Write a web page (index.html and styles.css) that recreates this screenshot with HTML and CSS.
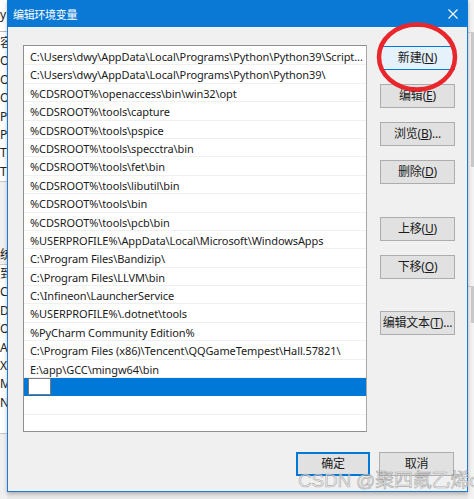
FILE: index.html
```html
<!DOCTYPE html>
<html lang="zh-CN">
<head>
<meta charset="utf-8">
<title>编辑环境变量</title>
<link rel="stylesheet" href="styles.css">
</head>
<body>
<div class="screen">
  <div class="bg-left">
    <div class="bg-top">y</div>
    <div class="bg-list">
      <div class="bg-row">容</div>
      <div class="bg-row">O</div>
      <div class="bg-row">O</div>
      <div class="bg-row">O</div>
      <div class="bg-row">Pa</div>
      <div class="bg-row">Py</div>
      <div class="bg-row">TE</div>
      <div class="bg-row">TM</div>
    </div>
    <div class="bg-gap"></div>
    <div class="bg-head">统</div>
    <div class="bg-list2">
      <div class="bg-row">到</div>
      <div class="bg-row">Co</div>
      <div class="bg-row">D/</div>
      <div class="bg-row">Or</div>
      <div class="bg-row">A</div>
      <div class="bg-row">XI</div>
      <div class="bg-row">M</div>
      <div class="bg-row">N</div>
    </div>
  </div>

  <div class="dialog">
    <div class="titlebar">
      <span class="title">编辑环境变量</span>
      <svg class="close" width="10" height="10" viewBox="0 0 10 10"><path d="M0.5 0.5L9.5 9.5M9.5 0.5L0.5 9.5" stroke="#fff" stroke-width="1.1" fill="none"/></svg>
    </div>
    <div class="body">
      <div class="list">
        <div class="row">C:\Users\dwy\AppData\Local\Programs\Python\Python39\Script...</div>
        <div class="row">C:\Users\dwy\AppData\Local\Programs\Python\Python39\</div>
        <div class="row">%CDSROOT%\openaccess\bin\win32\opt</div>
        <div class="row">%CDSROOT%\tools\capture</div>
        <div class="row">%CDSROOT%\tools\pspice</div>
        <div class="row">%CDSROOT%\tools\specctra\bin</div>
        <div class="row">%CDSROOT%\tools\fet\bin</div>
        <div class="row">%CDSROOT%\tools\libutil\bin</div>
        <div class="row">%CDSROOT%\tools\bin</div>
        <div class="row">%CDSROOT%\tools\pcb\bin</div>
        <div class="row">%USERPROFILE%\AppData\Local\Microsoft\WindowsApps</div>
        <div class="row">C:\Program Files\Bandizip\</div>
        <div class="row">C:\Program Files\LLVM\bin</div>
        <div class="row">C:\Infineon\LauncherService</div>
        <div class="row">%USERPROFILE%\.dotnet\tools</div>
        <div class="row">%PyCharm Community Edition%</div>
        <div class="row">C:\Program Files (x86)\Tencent\QQGameTempest\Hall.57821\</div>
        <div class="row">E:\app\GCC\mingw64\bin</div>
        <div class="row selected"><span class="editbox"></span></div>
        <div class="row"></div>
      </div>
      <div class="buttons">
        <button class="btn focused">新建(<u>N</u>)</button>
        <button class="btn">编辑(<u>E</u>)</button>
        <button class="btn">浏览(<u>B</u>)...</button>
        <button class="btn">删除(<u>D</u>)</button>
        <button class="btn spaced">上移(<u>U</u>)</button>
        <button class="btn">下移(<u>O</u>)</button>
        <button class="btn spaced2">编辑文本(<u>T</u>)...</button>
      </div>
    </div>
    <div class="footer">
      <button class="btn default">确定</button>
      <button class="btn">取消</button>
    </div>
    <svg class="annot" width="86" height="74" viewBox="0 0 86 74"><ellipse cx="43" cy="36" rx="38" ry="32.5" fill="none" stroke="#e8262b" stroke-width="4.5"/></svg>
    <div class="watermark">CSDN @聚四氟乙烯ol</div>
  </div>

  <div class="bg-right">
    <div class="bg-r1"></div>
    <div class="bg-thumb"></div>
    <div class="bg-r2"></div>
    <div class="bg-thumb2"></div>
  </div>
</div>
</body>
</html>
```

FILE: styles.css
```css
* { box-sizing: border-box; }
html, body {
  margin: 0;
  padding: 0;
}
body {
  width: 474px;
  height: 499px;
  overflow: hidden;
  background: #e9e9e9;
  font-family: "Noto Sans", "Noto Sans CJK SC", sans-serif;
  font-size: 12px;
  color: #111;
}
.screen {
  display: flex;
  width: 474px;
  height: 499px;
}

/* background window, left */
.bg-left {
  width: 7px;
  flex: none;
  overflow: hidden;
  background: #f0f0f0;
  font-size: 12px;
  line-height: 18.4px;
  color: #222;
  white-space: nowrap;
}
.bg-top {
  height: 32px;
  padding-top: 6px;
  background: #fff;
  border-bottom: 1px solid #bdbdbd;
}
.bg-list {
  background: #fff;
  padding-top: 2px;
  height: 150px;
  border-bottom: 1px solid #c8c8c8;
}
.bg-gap { height: 64px; }
.bg-head { height: 18px; line-height: 18px; }
.bg-list2 {
  background: #fff;
  border-top: 1px solid #c8c8c8;
  border-bottom: 1px solid #c8c8c8;
  height: 170px;
}
.bg-row { height: 18.4px; }

/* background window, right */
.bg-right {
  width: 6px;
  flex: none;
  background: #f3f3f3;
  display: flex;
  flex-direction: column;
  align-items: flex-end;
}
.bg-r1 { height: 33px; width: 6px; border-bottom: 1px solid #cfcfcf; }
.bg-thumb { height: 134px; width: 3px; background: #c9c9c9; }
.bg-r2 { height: 120px; width: 6px; border-bottom: 1px solid #cfcfcf; }
.bg-thumb2 { height: 36px; width: 3px; background: #c9c9c9; }

/* dialog */
.dialog {
  position: relative;
  width: 461px;
  height: 492px;
  flex: none;
  background: #f0f0f0;
  border: 1px solid #1a7ad4;
  border-top: none;
  display: flex;
  flex-direction: column;
  box-shadow: 0 2px 4px rgba(0,0,0,0.25);
}
.titlebar {
  height: 27px;
  flex: none;
  background: #0a79d6;
  display: flex;
  align-items: center;
  justify-content: space-between;
  padding: 0 10px 0 6px;
  margin: 0 -1px;
}
.title {
  color: #fff;
  font-size: 11px;
  letter-spacing: -0.3px;
}
.close { display: block; }

.body {
  display: flex;
  padding: 18px 0 0 15px;
}
.list {
  width: 344px;
  height: 387px;
  background: #fff;
  border: 1px solid #8f8f8f;
  border-right-color: #a8a8a8;
  padding-top: 1px;
  overflow: hidden;
}
.row {
  height: 18.4px;
  line-height: 15.4px;
  padding-top: 2px;
  font-size: 11px;
  border-bottom: 1px solid #f0f0f0;
  padding-left: 6px;
  white-space: nowrap;
  overflow: hidden;
  color: #1b1b1b;
  letter-spacing: -0.1px;
}
.row.selected {
  background: #0078d7;
  padding-left: 4px;
  padding-top: 0;
  border-bottom-color: #0078d7;
}
.editbox {
  display: block;
  width: 23px;
  height: 17px;
  background: #fff;
  border: 1px solid #7a7a7a;
}

.buttons {
  display: flex;
  flex-direction: column;
  gap: 14px;
  margin-left: 13px;
  padding-top: 1px;
}
.btn {
  width: 75px;
  height: 24px;
  padding: 0;
  background: #e1e1e1;
  border: 1px solid #adadad;
  font-family: "Noto Sans", "Noto Sans CJK SC", sans-serif;
  font-size: 12px;
  color: #1b1b1b;
  line-height: 20px;
  letter-spacing: -0.2px;
}
.btn u { text-underline-offset: 1px; }
.btn.focused {
  background: #e5f1fb;
  border-color: #0078d7;
}
.btn.spaced { margin-top: 19px; }
.btn.spaced2 { margin-top: 18px; }
.footer {
  display: flex;
  justify-content: flex-end;
  gap: 9px;
  padding: 20px 13px 0 0;
}
.btn.default {
  width: 74px;
  border: 2px solid #0078d7;
}

.annot {
  position: absolute;
  left: 366px;
  top: 21px;
}
.watermark {
  position: absolute;
  left: 290px;
  top: 470px;
  font-family: "Liberation Sans", "Noto Sans CJK SC", sans-serif;
  font-size: 19px;
  line-height: 22px;
  color: rgba(235,235,235,0.75);
  -webkit-text-stroke: 0.6px rgba(110,110,110,0.55);
  white-space: nowrap;
  letter-spacing: -0.2px;
}
```
